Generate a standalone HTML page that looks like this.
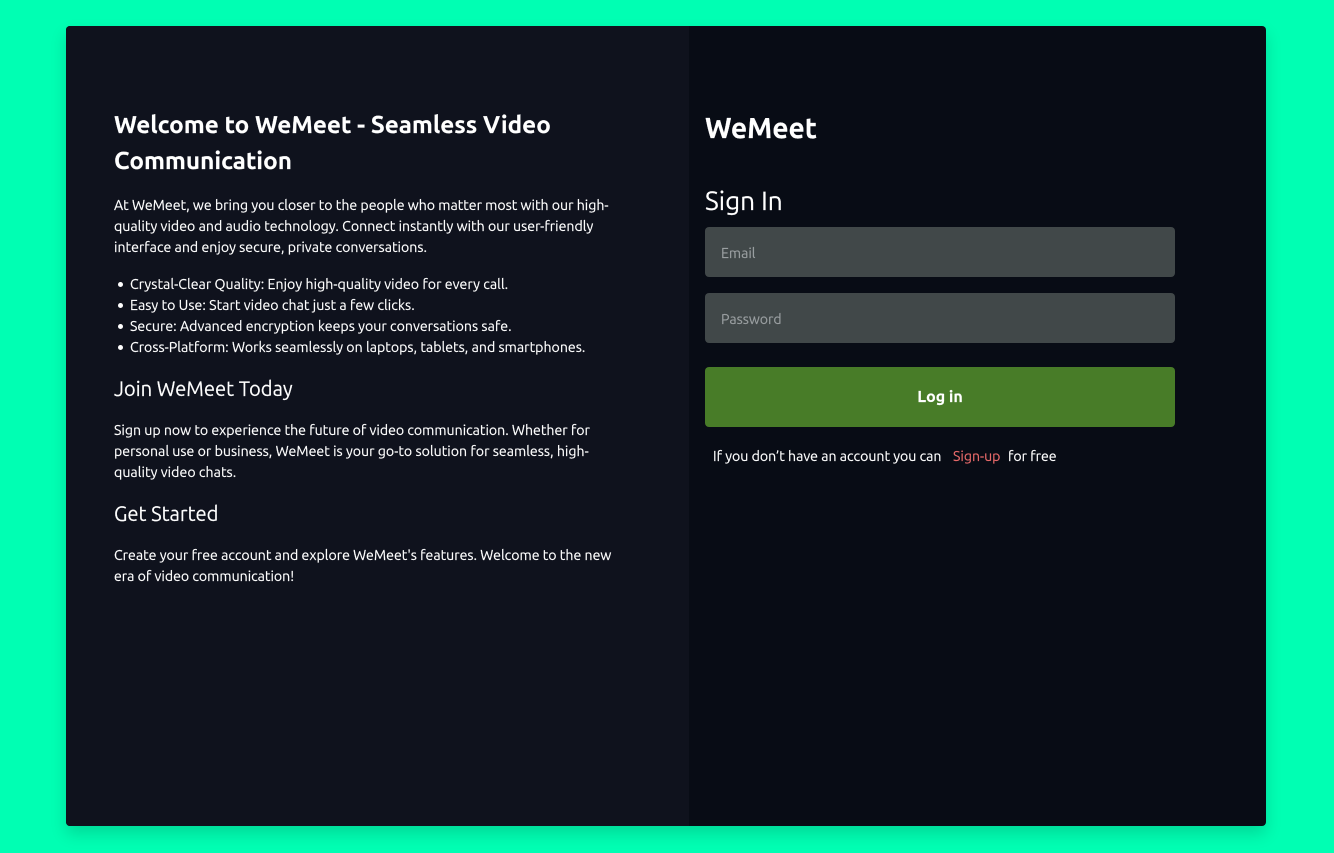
<!DOCTYPE html>
<html lang="en">
<head>
<meta charset="utf-8">
<title>WeMeet</title>
<style>
html,body{margin:0;padding:0;width:1334px;height:853px;overflow:hidden;background:#00ffb3}
body{font-family:"Ubuntu","Liberation Sans",sans-serif;color:#fff;position:relative}
#card{position:absolute;left:66px;top:26px;width:1200px;height:800px;border-radius:4px;overflow:hidden;background:#080c15;box-shadow:0 8px 16px rgba(0,0,0,.15)}
#left{position:absolute;left:66px;top:26px;width:623px;height:800px;background:#0f121d;border-radius:4px 0 0 4px}
.t{position:absolute;white-space:nowrap;font-size:14.14px;line-height:20px;height:20px;-webkit-text-stroke:.15px currentColor}
.h1{font-size:24.33px;font-weight:700;line-height:30px;height:30px}
.h3{font-size:20.2px;line-height:26px;height:26px}
.dot{position:absolute;left:118px;width:5px;height:5px;border-radius:50%;background:#fff}
.box{position:absolute;left:705px;width:470px;height:50px;border-radius:4px;background:#414849}
.ph{color:#9a9fa1}
#btn{position:absolute;left:705px;top:367px;width:470px;height:60px;border-radius:4px;background:#487c28;color:#fff;font-weight:700;font-size:16px;line-height:61px;text-align:center;-webkit-text-stroke:.15px currentColor}
</style>
</head>
<body>
<div id="card"></div>
<div id="left"></div>

<div class="t h1" style="left:114px;top:109px">Welcome to WeMeet - Seamless Video</div>
<div class="t h1" style="left:114px;top:145px">Communication</div>

<div class="t" style="left:114px;top:195px">At WeMeet, we bring you closer to the people who matter most with our high-</div>
<div class="t" style="left:114px;top:216px;letter-spacing:.027px">quality video and audio technology. Connect instantly with our user-friendly</div>
<div class="t" style="left:114px;top:237px;letter-spacing:.02px">interface and enjoy secure, private conversations.</div>

<div class="dot" style="top:282px"></div>
<div class="t" style="left:130px;top:274px;letter-spacing:.048px">Crystal-Clear Quality: Enjoy high-quality video for every call.</div>
<div class="dot" style="top:303px"></div>
<div class="t" style="left:130px;top:295px;letter-spacing:.04px">Easy to Use: Start video chat just a few clicks.</div>
<div class="dot" style="top:324px"></div>
<div class="t" style="left:130px;top:316px;letter-spacing:.035px">Secure: Advanced encryption keeps your conversations safe.</div>
<div class="dot" style="top:345px"></div>
<div class="t" style="left:130px;top:337px;letter-spacing:.03px">Cross-Platform: Works seamlessly on laptops, tablets, and smartphones.</div>

<div class="t h3" style="left:114px;top:376px">Join WeMeet Today</div>

<div class="t" style="left:114px;top:420px">Sign up now to experience the future of video communication. Whether for</div>
<div class="t" style="left:114px;top:441px;letter-spacing:.027px">personal use or business, WeMeet is your go-to solution for seamless, high-</div>
<div class="t" style="left:114px;top:462px;letter-spacing:.05px">quality video chats.</div>

<div class="t h3" style="left:114px;top:501px">Get Started</div>

<div class="t" style="left:114px;top:545px;letter-spacing:.013px">Create your free account and explore WeMeet's features. Welcome to the new</div>
<div class="t" style="left:114px;top:566px">era of video communication!</div>

<div class="t" style="left:705px;top:112px;font-size:28.25px;font-weight:700;line-height:34px;height:34px">WeMeet</div>
<div class="t" style="left:705px;top:186px;font-size:26.2px;line-height:30px;height:30px">Sign In</div>

<div class="box" style="top:227px"></div>
<div class="t ph" style="left:721px;top:243px">Email</div>
<div class="box" style="top:293px"></div>
<div class="t ph" style="left:721px;top:309px">Password</div>

<div id="btn">Log in</div>

<div class="t" style="left:713px;top:446px">If you don’t have an account you can</div>
<div class="t" style="left:953px;top:446px;color:#e86a6a">Sign-up</div>
<div class="t" style="left:1008px;top:446px">for free</div>
</body>
</html>
